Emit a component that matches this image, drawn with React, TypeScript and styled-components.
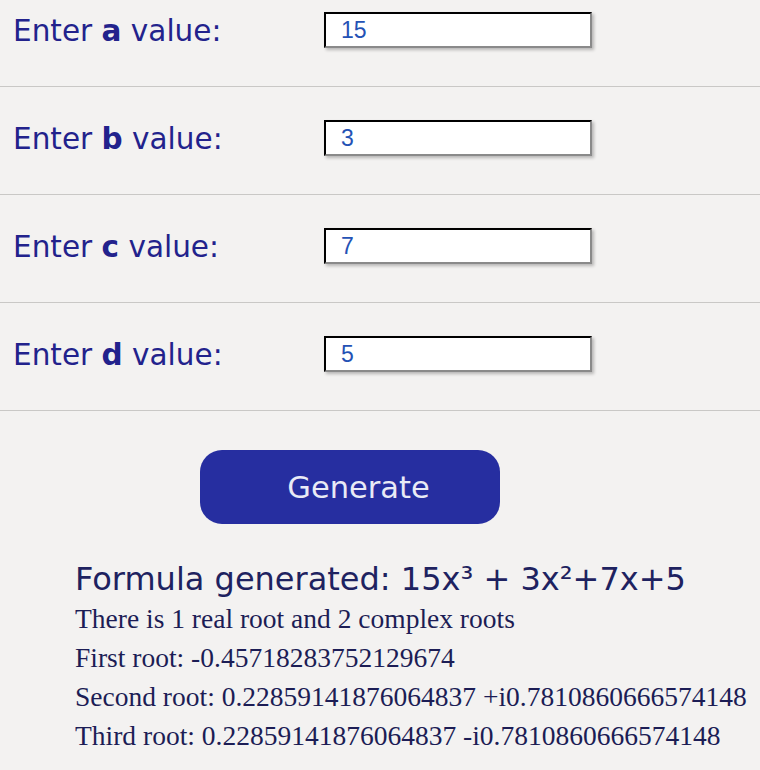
import React from 'react';
import styled, { createGlobalStyle } from 'styled-components';

const GlobalStyle = createGlobalStyle`
    html, body {
        margin: 0;
        padding: 0;
        background-color: #f3f2f1;
    }
`;

const Page = styled.div`
    width: 760px;
    height: 770px;
    overflow: hidden;
    background-color: #f3f2f1;
`;

const Row = styled.div<{ first?: boolean }>`
    display: grid;
    grid-template-columns: 311px 268px;
    align-items: center;
    padding: ${(props) => (props.first ? '12px' : '33px')} 0 38px 13px;
    border-bottom: 1px solid #c9c8c6;
`;

const Label = styled.label`
    display: block;
    padding-top: 3px;
    font-family: "DejaVu Sans", sans-serif;
    font-size: 29.5px;
    color: #22228c;
    line-height: 33px;
    b {
        font-weight: 700;
    }
`;

const ValueInput = styled.input`
    box-sizing: border-box;
    width: 268px;
    height: 36px;
    padding: 0 15px;
    border: 2px inset #767676;
    border-top-color: #3a3a3a;
    border-left-color: #3a3a3a;
    border-bottom-color: #8a8a8a;
    border-right-color: #8a8a8a;
    box-shadow: 2px 2px 3px rgba(0, 0, 0, 0.25);
    background: #ffffff;
    font-family: "Liberation Sans", Arial, sans-serif;
    font-size: 23px;
    color: #2452b5;
    outline: none;
`;

const ButtonWrap = styled.div`
    padding: 39px 0 0 200px;
`;

const GenerateButton = styled.button`
    width: 300px;
    height: 74px;
    padding: 0 0 0 17px;
    border: none;
    border-radius: 22px;
    background-color: #262ea0;
    color: #e9eaf6;
    font-family: "DejaVu Sans", sans-serif;
    font-size: 30.5px;
    cursor: pointer;
`;

const Results = styled.div`
    padding: 35px 0 0 75px;
`;

const Formula = styled.div`
    font-family: "DejaVu Sans", sans-serif;
    font-size: 32px;
    line-height: 40px;
    color: #1e2260;
`;

const ResultLine = styled.p`
    margin: 0;
    font-family: "Liberation Serif", "Times New Roman", serif;
    font-size: 27.5px;
    line-height: 39px;
    color: #1c1d55;
`;

const fields = [
    { name: 'a', value: '15' },
    { name: 'b', value: '3' },
    { name: 'c', value: '7' },
    { name: 'd', value: '5' },
];

const App = () => {
    return (
        <Page>
            <GlobalStyle />
            {fields.map((f, i) => (
                <Row key={f.name} first={i === 0}>
                    <Label>Enter <b>{f.name}</b> value:</Label>
                    <ValueInput type="text" defaultValue={f.value} />
                </Row>
            ))}
            <ButtonWrap>
                <GenerateButton>Generate</GenerateButton>
            </ButtonWrap>
            <Results>
                <Formula>Formula generated: 15x³ + 3x²+7x+5</Formula>
                <ResultLine>There is 1 real root and 2 complex roots</ResultLine>
                <ResultLine>First root: -0.45718283752129674</ResultLine>
                <ResultLine>Second root: 0.22859141876064837 +i0.7810860666574148</ResultLine>
                <ResultLine>Third root: 0.22859141876064837 -i0.7810860666574148</ResultLine>
            </Results>
        </Page>
    );
};

export default App;
